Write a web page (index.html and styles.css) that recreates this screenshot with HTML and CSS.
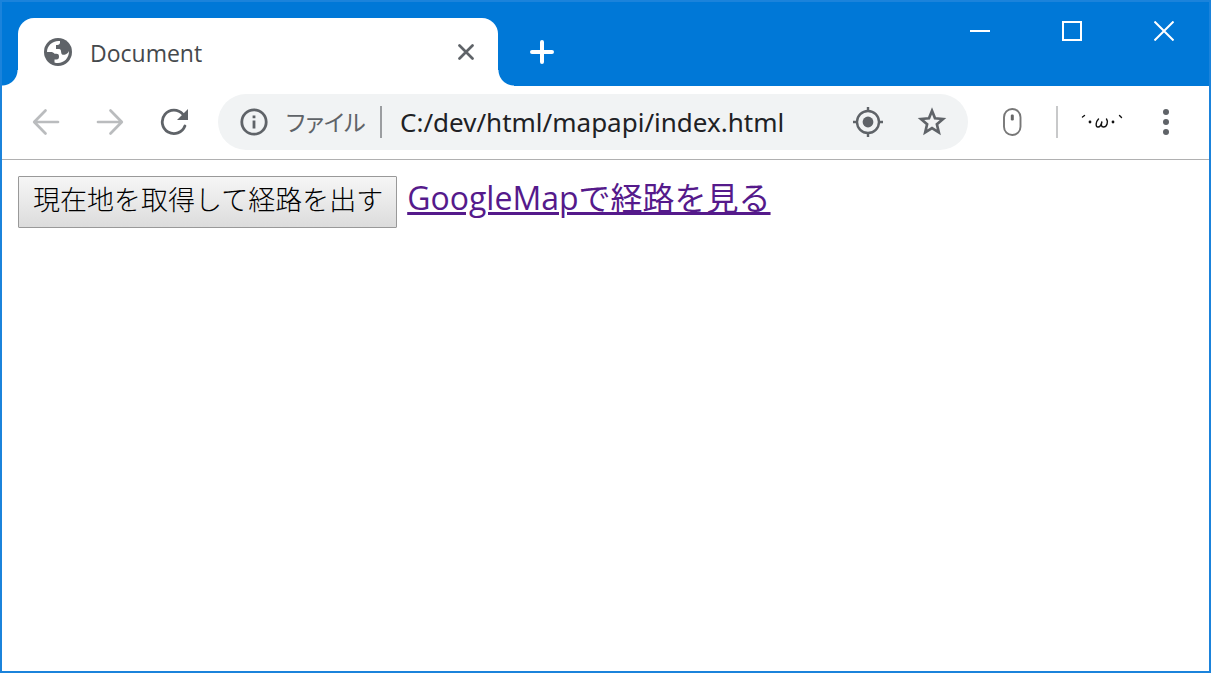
FILE: index.html
```html
<!DOCTYPE html>
<html lang="ja">
<head>
<meta charset="utf-8">
<title>Document</title>
<link rel="stylesheet" href="styles.css">
</head>
<body>
<div class="window">
  <header class="titlebar">
    <div class="tab">
      <svg class="favicon" viewBox="0 0 28 28" aria-hidden="true">
        <circle cx="14" cy="14" r="14" fill="#5f6368"/>
        <path d="M3 14C3 8 8 3 14.500 3H16V4.500C16 6 15 7 13.500 7H12V11H15C16.800 11 17 12.500 17.200 14.500C17.500 16.800 19 17 20.500 16.800C22.500 16.500 24 15 25 13C25.200 20 20 25 14 25C12.500 25 11.500 24.800 10.500 24.400V21.500H12.500C14.300 21.500 15 20.500 15 18.500C15 16.500 14 15.800 12.500 15.800H10.500C9.800 14.500 8.500 14 6.500 14Z" fill="#fff"/>
      </svg>
      <span class="tab-title">Document</span>
      <button class="tab-close" aria-label="タブを閉じる">
        <svg width="16" height="16" viewBox="0 0 16 16"><path d="M1.500 1.500L14.500 14.500M14.500 1.500L1.500 14.500" stroke="#5f6368" stroke-width="2.700" stroke-linecap="round"/></svg>
      </button>
    </div>
    <button class="new-tab" aria-label="新しいタブ">
      <svg width="24" height="24" viewBox="0 0 24 24"><path d="M12 2V22M2 12H22" stroke="#fff" stroke-width="4" stroke-linecap="round"/></svg>
    </button>
    <div class="window-controls">
      <button class="window-button" aria-label="最小化">
        <svg width="20" height="20" viewBox="0 0 20 20"><path d="M0 10H20" stroke="#fff" stroke-width="2"/></svg>
      </button>
      <button class="window-button" aria-label="最大化">
        <svg width="20" height="20" viewBox="0 0 20 20"><path d="M1 1H19V19H1Z" fill="none" stroke="#fff" stroke-width="2"/></svg>
      </button>
      <button class="window-button" aria-label="閉じる">
        <svg width="20" height="20" viewBox="0 0 20 20"><path d="M.5 .5L19.500 19.500M19.500 .5L.5 19.500" stroke="#fff" stroke-width="2"/></svg>
      </button>
    </div>
  </header>

  <nav class="toolbar">
    <button class="tool" aria-label="戻る">
      <svg width="28" height="28" viewBox="0 0 28 28"><path d="M26 14H2.500M13.500 2.500L2.200 14L13.500 25.500" fill="none" stroke="#babcbe" stroke-width="2.700" stroke-linecap="round" stroke-linejoin="round"/></svg>
    </button>
    <button class="tool" aria-label="進む">
      <svg width="28" height="28" viewBox="0 0 28 28"><path d="M2 14H25.500M14.500 2.500L25.800 14L14.500 25.500" fill="none" stroke="#babcbe" stroke-width="2.700" stroke-linecap="round" stroke-linejoin="round"/></svg>
    </button>
    <button class="tool" aria-label="再読み込み">
      <svg width="28" height="28" viewBox="0 0 28 28"><path d="M22.800 6.200A11.700 11.700 0 1 0 24.900 18" fill="none" stroke="#5f6368" stroke-width="2.800" stroke-linecap="round"/><path d="M28 1V12H17Z" fill="#5f6368"/></svg>
    </button>
    <div class="omnibox">
      <svg width="28" height="28" viewBox="0 0 28 28" aria-hidden="true"><circle cx="14" cy="14" r="12.200" fill="none" stroke="#5f6368" stroke-width="2.800"/><path d="M12.600 7.500H15.400V10.300H12.600ZM12.600 12.500H15.400V20.500H12.600Z" fill="#5f6368"/></svg>
      <label class="scheme" for="url">ファイル</label>
      <input class="url" id="url" type="text" value="C:/dev/html/mapapi/index.html">
      <button class="tool" aria-label="位置情報">
        <svg width="30" height="30" viewBox="0 0 30 30"><g fill="none" stroke="#5f6368" stroke-width="2.400"><circle cx="15" cy="15" r="11"/><path d="M15 0V4M15 26V30M0 15H4M26 15H30"/></g><circle cx="15" cy="15" r="5.400" fill="#5f6368"/></svg>
      </button>
      <button class="tool" aria-label="ブックマーク">
        <svg width="30" height="30" viewBox="0 0 30 30"><path d="M15 3.800L18 11.300L26 12L19.900 17.300L21.800 25.300L15 21.100L8.200 25.300L10.100 17.300L4 12L12 11.300Z" fill="none" stroke="#5f6368" stroke-width="2.700"/></svg>
      </button>
    </div>
    <button class="tool" aria-label="マウス">
      <svg width="20" height="30" viewBox="0 0 20 30"><rect x="2" y="2" width="16.500" height="26" rx="8.200" fill="none" stroke="#777" stroke-width="1.900"/><rect x="8.800" y="7.500" width="3" height="6" rx="1.200" fill="#666"/></svg>
    </button>
    <span class="divider"></span>
    <button class="tool" aria-label="拡張機能">
      <svg width="42" height="16" viewBox="0 0 42 16"><g fill="none" stroke="#111" stroke-linecap="round"><path d="M1.500 3L3.500 1.500M38.500 1.500L40.500 3.500" stroke-width="1.400"/><path d="M17.500 5C15 7.500 14 13 17 13C19.500 13 20.500 10 21 7.500C20 10.500 20 13 22.500 13C26 13 27.500 7.500 25.500 5" stroke-width="1.400"/></g><circle cx="9" cy="8" r="1.400" fill="#111"/><circle cx="32" cy="8" r="1.400" fill="#111"/></svg>
    </button>
    <button class="tool" aria-label="メニュー">
      <svg width="8" height="28" viewBox="0 0 8 28" fill="#5f6368"><circle cx="4" cy="4" r="3"/><circle cx="4" cy="14" r="3"/><circle cx="4" cy="24" r="3"/></svg>
    </button>
  </nav>

  <main class="page">
    <button class="route-button">現在地を取得して経路を出す</button>
    <a class="map-link" href="#">GoogleMapで経路を見る</a>
  </main>
</div>
</body>
</html>
```
FILE: styles.css
```css
* {
  box-sizing: border-box;
}

body {
  margin: 0;
  background: #fff;
  font-family: "Open Sans", "Noto Sans CJK JP", sans-serif;
}

button,
input {
  margin: 0;
  padding: 0;
  border: 0;
  background: none;
  font-family: inherit;
}

svg {
  display: block;
  flex: none;
}

.window {
  display: flex;
  flex-direction: column;
  min-height: 100vh;
  border: 2px solid #1b83db;
}

.titlebar {
  display: flex;
  align-items: flex-end;
  height: 84px;
  padding-left: 16px;
  background: #0078d7;
}

.tab {
  position: relative;
  display: flex;
  align-items: center;
  flex: 0 1 480px;
  height: 68px;
  padding: 0 16px 0 26px;
  border-radius: 16px 16px 0 0;
  background: #fff;
}

.tab::before,
.tab::after {
  content: "";
  position: absolute;
  bottom: 0;
  width: 16px;
  height: 16px;
}

.tab::before {
  right: 100%;
  background: radial-gradient(circle at 0 0, #0078d7 15px, #fff 16px);
}

.tab::after {
  left: 100%;
  background: radial-gradient(circle at 100% 0, #0078d7 15px, #fff 16px);
}

.favicon {
  width: 28px;
  height: 28px;
}

.tab-title {
  flex: 1;
  margin-left: 18px;
  padding-top: 2px;
  color: #45494d;
  font-size: 23px;
}

.tab-close {
  display: grid;
  place-items: center;
  width: 32px;
  height: 32px;
}

.new-tab {
  display: grid;
  place-items: center;
  width: 56px;
  height: 68px;
  margin-left: 16px;
}

.window-controls {
  display: flex;
  align-self: flex-start;
  margin-left: auto;
}

.window-button {
  display: grid;
  place-items: center;
  width: 92px;
  height: 58px;
  padding-left: 2px;
}

.toolbar {
  display: flex;
  align-items: center;
  height: 74px;
  padding: 0 11px 1px 12px;
  border-bottom: 1px solid #b0b0b1;
}

.tool {
  display: grid;
  place-items: center;
  flex: none;
  width: 64px;
  height: 56px;
}

.omnibox {
  display: flex;
  align-items: center;
  flex: 1;
  min-width: 0;
  height: 56px;
  margin: 0 12px;
  padding: 0 4px 0 22px;
  border-radius: 28px;
  background: #f1f3f4;
}

.scheme {
  width: 96px;
  margin: 0 18px;
  border-right: 2px solid #9b9da0;
  color: #5f6368;
  font-size: 23px;
  font-weight: 400;
  line-height: 32px;
  font-feature-settings: "palt";
  white-space: nowrap;
}

.url {
  flex: 1;
  min-width: 0;
  color: #202124;
  font-family: "Noto Sans", sans-serif;
  font-size: 26px;
  line-height: 36px;
}

.divider {
  width: 2px;
  height: 32px;
  margin: 0 12px;
  background: #c8c9ca;
}

.page {
  display: flex;
  flex-wrap: wrap;
  align-items: flex-start;
  gap: 10px;
  padding: 16px;
}

.route-button {
  height: 52px;
  padding: 0 13px 7px 14px;
  border: 1px solid #999;
  border-radius: 1px;
  background: linear-gradient(#f6f6f6, #dcdcdc);
  color: #000;
  font-size: 27px;
  font-weight: 300;
}

.map-link {
  color: #551a8b;
  font-size: 32px;
  font-weight: 400;
  line-height: 44px;
  text-decoration-thickness: 3px;
}
```
